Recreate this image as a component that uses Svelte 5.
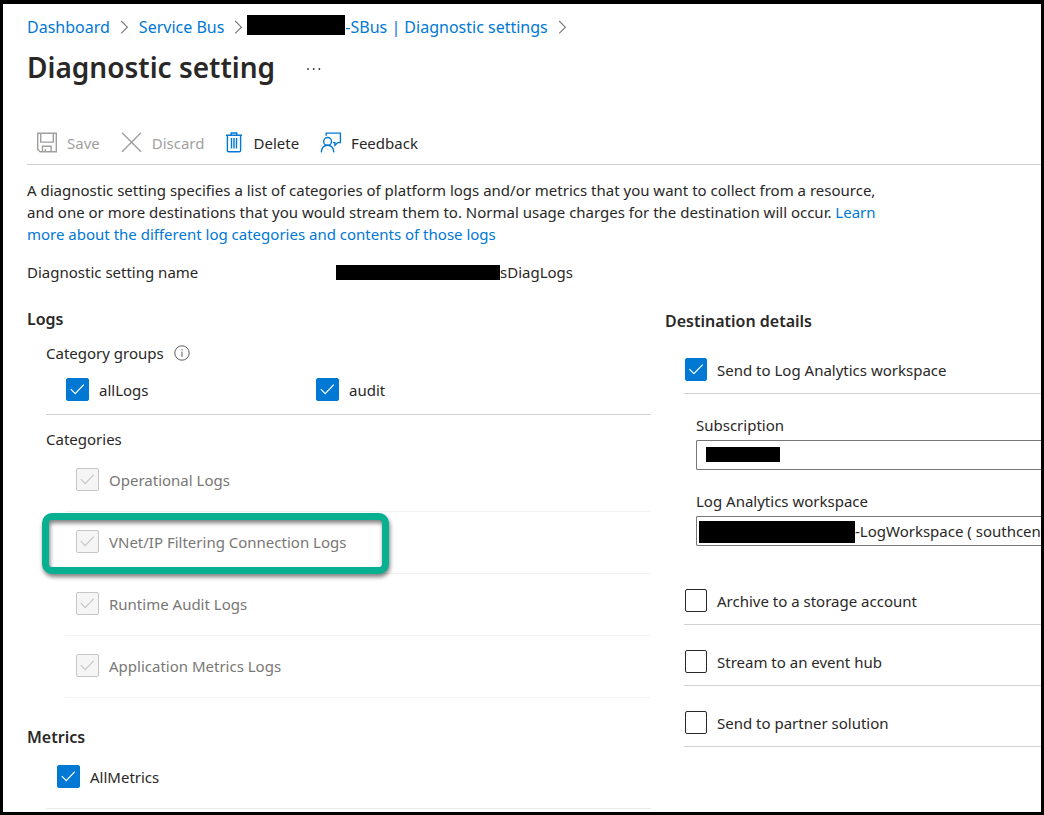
<script>
  const categories = [
    { id: 'operational', label: 'Operational Logs' },
    { id: 'vnet', label: 'VNet/IP Filtering Connection Logs', highlighted: true },
    { id: 'runtime', label: 'Runtime Audit Logs' },
    { id: 'appmetrics', label: 'Application Metrics Logs' }
  ];
  const otherDestinations = [
    { id: 'storage', label: 'Archive to a storage account' },
    { id: 'eventhub', label: 'Stream to an event hub' },
    { id: 'partner', label: 'Send to partner solution' }
  ];
</script>

{#snippet chevron()}
  <svg class="chevron" width="9" height="14" viewBox="0 0 9 14" aria-hidden="true">
    <path d="M1.2 1 7.4 7.2l-6.2 6.2" fill="none" stroke="#797775" stroke-width="1.1" />
  </svg>
{/snippet}

<div class="frame">
  <nav class="breadcrumb" aria-label="Breadcrumb">
    <a href="#dashboard">Dashboard</a>
    {@render chevron()}
    <a href="#bus">Service Bus</a>
    {@render chevron()}
    <a class="resource" href="#settings"><span class="mask mask-crumb"></span>-SBus | Diagnostic settings</a>
    {@render chevron()}
  </nav>

  <header class="title">
    <h1>Diagnostic setting</h1>
    <button class="more" aria-label="More">
      <svg width="16" height="4" viewBox="0 0 16 4" fill="#323130" aria-hidden="true">
        <circle cx="2" cy="2" r="0.9" /><circle cx="7.7" cy="2" r="0.9" /><circle cx="13.4" cy="2" r="0.9" />
      </svg>
    </button>
  </header>

  <div class="toolbar">
    <button class="save" disabled>
      <svg width="22" height="22" viewBox="0 0 22 22" fill="none" stroke="#a19f9d" stroke-width="1.4" aria-hidden="true">
        <path d="M1.7 1.2h18.6v18.6H4.2l-2.5-2.5zM4.7 1.2v8.9h12.6V1.2M6.5 19.8v-5.6h8.6v5.6M9.4 19.8v-2.9" />
      </svg>
      Save
    </button>
    <button class="discard" disabled>
      <svg width="22" height="22" viewBox="0 0 22 22" fill="none" stroke="#a19f9d" stroke-width="1.4" aria-hidden="true">
        <path d="M1 .8l19 19M20 .8l-19 19" />
      </svg>
      Discard
    </button>
    <button class="delete">
      <svg width="18" height="22" viewBox="0 0 18 22" fill="none" stroke="#0078d4" stroke-width="1.4" aria-hidden="true">
        <path d="M1 3.2h16M6.2 3V1h5.6v2M2.4 3.2v15.2q0 1.4 1.4 1.4h10.4q1.4 0 1.4-1.4V3.2M6.5 6v10.6M9 6v10.6M11.5 6v10.6" />
      </svg>
      Delete
    </button>
    <button class="feedback">
      <svg width="22" height="22" viewBox="0 0 22 22" fill="none" stroke="#0078d4" stroke-width="1.4" aria-hidden="true">
        <circle cx="7.6" cy="9.4" r="3.9" />
        <path d="M1.3 20.4c.3-4.2 2.7-7.1 6.3-7.1s5.9 2.9 6.2 7.1M6.2 3.8V1.1h14.2v9.5h-2.6l-2.9 2.7v-2.7h-2" />
      </svg>
      Feedback
    </button>
  </div>

  <p class="intro">
    A diagnostic setting specifies a list of categories of platform logs and/or metrics that you want to collect from a resource,
    and one or more destinations that you would stream them to. Normal usage charges for the destination will occur.
    <a href="#learn">Learn more about the different log categories and contents of those logs</a>
  </p>

  <div class="name-row">
    <span>Diagnostic setting name</span>
    <span class="name-value"><span class="mask mask-name"></span>sDiagLogs</span>
  </div>

  <main class="columns">
    <div class="sources">
      <section>
        <h2>Logs</h2>
        <div class="groups">
          <h3>
            Category groups
            <svg width="16" height="16" viewBox="0 0 16 16" fill="none" stroke="#605e5c" aria-hidden="true">
              <circle cx="8" cy="8" r="7.2" /><path d="M8 6.6v5.2M8 4v1.4" />
            </svg>
          </h3>
          <div class="group-options">
            <label><input type="checkbox" checked />allLogs</label>
            <label><input type="checkbox" checked />audit</label>
          </div>
          <h3 class="categories-title">Categories</h3>
          <ul>
            {#each categories as c (c.id)}
              <li class:highlighted={c.highlighted}>
                <label><input type="checkbox" checked disabled />{c.label}</label>
              </li>
            {/each}
          </ul>
        </div>
      </section>
      <section class="metrics">
        <h2>Metrics</h2>
        <div class="metric-options">
          <label><input type="checkbox" checked />AllMetrics</label>
        </div>
      </section>
    </div>

    <section class="destinations">
      <h2>Destination details</h2>
      <div class="destination">
        <label><input type="checkbox" checked />Send to Log Analytics workspace</label>
      </div>
      <div class="fields">
        <label for="subscription">Subscription</label>
        <div class="field">
          <select id="subscription"><option></option></select>
          <span class="mask mask-sub"></span>
        </div>
        <label for="workspace">Log Analytics workspace</label>
        <div class="field">
          <select id="workspace" class="workspace"><option>-LogWorkspace ( southcentralus )</option></select>
          <span class="mask mask-ws"></span>
        </div>
      </div>
      {#each otherDestinations as d (d.id)}
        <div class="destination">
          <label><input type="checkbox" />{d.label}</label>
        </div>
      {/each}
    </section>
  </main>
</div>

<style>
  :global(body) { margin: 0; background: #fff; }
  .frame {
    box-sizing: border-box;
    min-height: 100vh;
    padding: 11px 0 0 24px;
    border: 3px solid #000;
    border-top-width: 4px;
    overflow: hidden;
    color: #292827;
    font: 15px/22px "Segoe UI", "Noto Sans", "Open Sans", sans-serif;
  }
  h1, h2, h3, p, ul { margin: 0; padding: 0; }
  a { color: #0078d4; text-decoration: none; }
  button { padding: 0; border: 0; background: none; color: inherit; font: inherit; }
  .mask { display: block; background: #000; }

  .breadcrumb { display: flex; align-items: center; gap: 10px; font-size: 16px; line-height: 24px; white-space: nowrap; }
  .chevron { flex: none; }
  .resource { display: flex; align-items: center; margin-left: -6px; }
  .mask-crumb { width: 98px; height: 20px; margin-bottom: 4px; }

  .title { display: flex; align-items: center; gap: 31px; margin-top: 8px; }
  h1 { font-size: 28px; line-height: 40px; font-weight: 600; }
  .more { display: flex; padding-top: 4px; }

  .toolbar { display: flex; align-items: center; gap: 21px; height: 42px; margin-top: 35px; padding-left: 9px; border-bottom: 1px solid #d2d0ce; }
  .toolbar button { display: flex; align-items: center; gap: 9px; }
  .toolbar button:disabled { color: #a19f9d; }
  .toolbar .delete { gap: 10px; }

  .intro { max-width: 870px; margin-top: 14px; }
  .name-row { display: grid; grid-template-columns: 309px 1fr; margin-top: 16px; }
  .name-value { display: flex; align-items: center; }
  .mask-name { width: 164px; height: 15px; }

  .columns { display: grid; grid-template-columns: minmax(0, 624fr) minmax(0, 376fr); gap: 14px; margin-top: 25px; }
  h2 { font-size: 16px; line-height: 22px; font-weight: 600; }
  h3 { display: flex; align-items: center; gap: 10px; font-size: 15px; line-height: 22px; font-weight: 400; }
  label { display: flex; align-items: center; gap: 10px; }

  .groups { padding-left: 19px; margin-top: 12px; }
  .group-options { display: grid; grid-template-columns: 250px 1fr; margin-top: 14px; padding: 0 0 13px 20px; border-bottom: 1px solid #d2d0ce; }
  .categories-title { margin-top: 13px; }
  ul { padding-left: 19px; list-style: none; }
  li { position: relative; padding: 18px 0 20px 11px; border-bottom: 1px solid #f3f2f1; color: #797775; }
  .highlighted::after {
    content: "";
    position: absolute;
    box-sizing: border-box;
    top: 1px;
    left: -23px;
    width: 347px;
    height: 61px;
    border: 7px solid #07b091;
    border-radius: 10px;
    filter: drop-shadow(1px 3px 2px rgba(0, 0, 0, 0.5));
    pointer-events: none;
  }
  .metrics { margin-top: 28px; }
  .metric-options { margin: 17px 0 0 19px; padding: 0 0 20px 11px; border-bottom: 1px solid #edebe9; }

  .destinations { padding-top: 2px; }
  .destination { margin-left: 19px; padding: 25px 0 12px 1px; border-bottom: 1px solid #d2d0ce; }
  h2 + .destination { padding-top: 26px; }
  .fields { display: grid; gap: 4px; margin: 20px 0 18px 31px; }
  .field { position: relative; }
  .field + label { margin-top: 16px; }
  select {
    display: block;
    box-sizing: border-box;
    width: 100%;
    height: 30px;
    padding: 0 0 0 9px;
    border: 1px solid #797775;
    border-right: 0;
    border-radius: 2px 0 0 2px;
    appearance: none;
    background: #fff;
    color: inherit;
    font: inherit;
    text-overflow: clip;
  }
  select.workspace { padding-left: 158px; }
  .field .mask { position: absolute; }
  .mask-sub { top: 7px; left: 10px; width: 74px; height: 15px; }
  .mask-ws { top: 5px; left: 3px; width: 156px; height: 22px; }

  input {
    flex: none;
    box-sizing: border-box;
    width: 23px;
    height: 23px;
    margin: 0;
    border: 1px solid #292827;
    border-radius: 2px;
    appearance: none;
    background: #fff center / 21px 21px no-repeat;
  }
  .destinations input { width: 22px; }
  input:checked {
    border-color: #0078d4;
    background-color: #0078d4;
    background-image: url("data:image/svg+xml,%3Csvg xmlns='http://www.w3.org/2000/svg' viewBox='0 0 21 21'%3E%3Cpath d='M3.8 10.2l4.4 4.4 8.6-8.9' fill='none' stroke='white' stroke-width='1.2'/%3E%3C/svg%3E");
  }
  input:disabled {
    border-color: #c8c6c4;
    background-color: #f5f5f5;
    background-image: url("data:image/svg+xml,%3Csvg xmlns='http://www.w3.org/2000/svg' viewBox='0 0 21 21'%3E%3Cpath d='M3.8 10.2l4.4 4.4 8.6-8.9' fill='none' stroke='%23c8c6c4' stroke-width='1.2'/%3E%3C/svg%3E");
  }
</style>
